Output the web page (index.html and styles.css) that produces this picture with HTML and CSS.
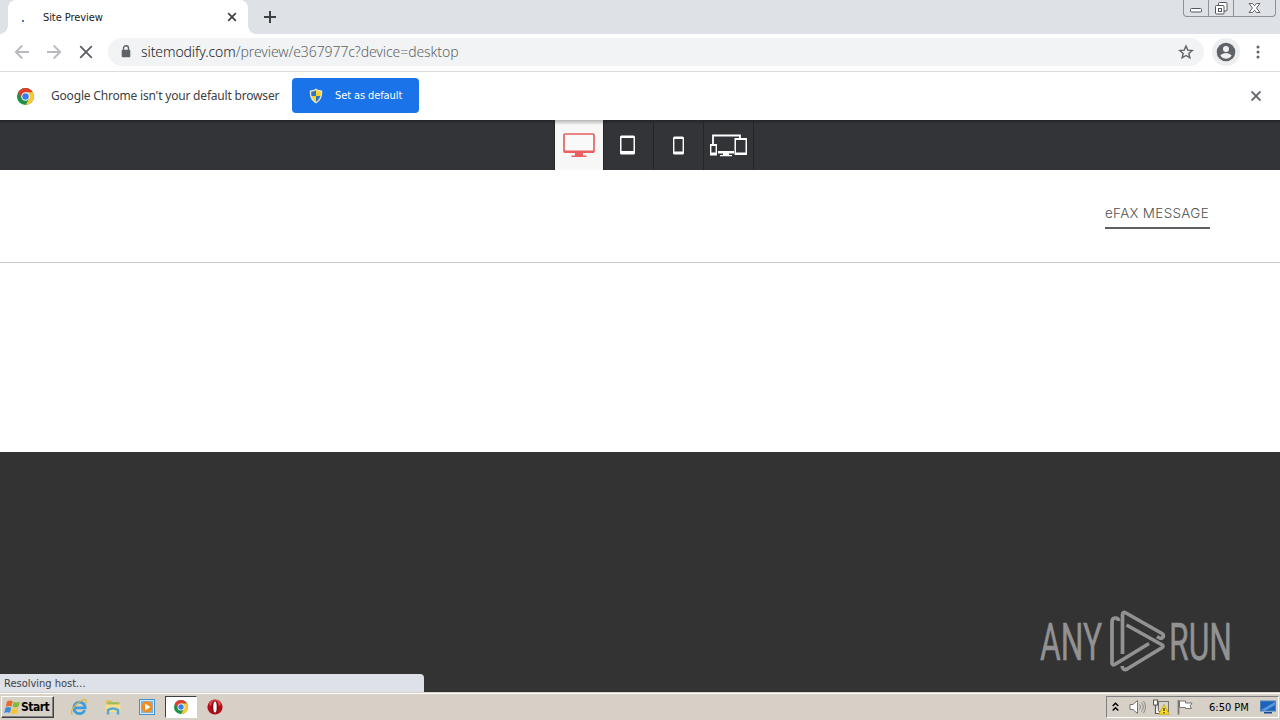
FILE: index.html
```html
<!DOCTYPE html>
<html lang="en">
<head>
    <meta charset="UTF-8">
    <meta name="viewport" content="width=device-width, initial-scale=1.0">
    <title>Site Preview</title>
    <link rel="stylesheet" href="styles.css">
</head>
<body>

<div class="screen">

    <!-- Tab strip -->
    <header class="tab-strip">
        <div class="tab">
            <span class="tab-spinner"></span>
            <span class="tab-title">Site Preview</span>
            <svg class="tab-close" width="10" height="10" viewBox="0 0 10 10"><path d="M1.2 1.2l7.6 7.6M8.8 1.2L1.2 8.8" stroke="#3c4043" stroke-width="1.7"/></svg>
        </div>
        <svg class="new-tab" width="12" height="12" viewBox="0 0 12 12"><path d="M6 0v12M0 6h12" stroke="#3c4043" stroke-width="2"/></svg>
        <div class="window-buttons">
            <span class="win-btn win-min"><svg width="13" height="17" viewBox="0 0 13 17"><rect x=".5" y="8.500" width="11" height="3.500" rx="1" fill="#fff" stroke="#53565f"/></svg></span>
            <span class="win-btn win-max"><svg width="13" height="17" viewBox="0 0 13 17"><rect x="3.500" y="2.500" width="8.500" height="8.500" rx="1" fill="#fff" stroke="#53565f"/><rect x=".5" y="5.500" width="8.500" height="8.500" rx="1" fill="#fff" stroke="#53565f"/><rect x="3.500" y="8.500" width="3" height="3" fill="#fff" stroke="#53565f"/></svg></span>
            <span class="win-btn win-close"><svg width="13" height="17" viewBox="0 0 13 17"><path d="M1 3.500h3.500l2 2.300 2-2.300H12L8.500 8l3.500 4.500H8.500l-2-2.300-2 2.300H1L4.500 8z" fill="#fff" stroke="#53565f" stroke-width=".9"/></svg></span>
        </div>
    </header>

    <!-- Toolbar -->
    <div class="toolbar">
        <svg class="nav-icon" width="16" height="16" viewBox="0 0 16 16"><path d="M15 8H2M8.300 1.500L1.800 8l6.500 6.500" fill="none" stroke="#b8babd" stroke-width="1.800"/></svg>
        <svg class="nav-icon" width="16" height="16" viewBox="0 0 16 16"><path d="M1 8h13M7.700 1.500L14.200 8l-6.500 6.500" fill="none" stroke="#b8babd" stroke-width="1.800"/></svg>
        <svg class="nav-icon" width="16" height="16" viewBox="0 0 16 16"><path d="M2.200 2.200l11.600 11.600M13.800 2.200L2.200 13.800" stroke="#5b5e62" stroke-width="1.800"/></svg>
        <div class="omnibox">
            <svg width="10" height="13" viewBox="0 0 10 13"><path d="M2.500 5.500V3.300a2.500 2.500 0 0 1 5 0v2.200" fill="none" stroke="#5f6368" stroke-width="1.400"/><rect x=".7" y="4.700" width="8.600" height="7.500" rx="1" fill="#5f6368"/></svg>
            <span class="url"><span class="url-host">sitemodify.com</span>/preview/e367977c?device=desktop</span>
            <svg class="star" width="16" height="16" viewBox="0 0 16 16"><path d="M8 2l1.750 4.100 4.450.4-3.400 2.900 1.050 4.400L8 11.500l-3.850 2.300L5.200 9.400 1.800 6.500l4.450-.4z" fill="none" stroke="#5f6368" stroke-width="1.400"/></svg>
        </div>
        <div class="avatar">
            <svg width="20" height="20" viewBox="0 0 20 20"><circle cx="10" cy="10" r="9.300" fill="#5f6368"/><circle cx="10" cy="7" r="3" fill="#eef0f2"/><path d="M4.300 13.800c1.200-2 4-2.800 5.700-2.800s4.500.8 5.700 2.800A6.900 6.900 0 0 1 10 16.700a6.900 6.900 0 0 1-5.700-2.900z" fill="#eef0f2"/></svg>
        </div>
        <svg class="menu-dots" width="4" height="14" viewBox="0 0 4 14"><g fill="#5f6368"><circle cx="2" cy="2" r="1.500"/><circle cx="2" cy="7" r="1.500"/><circle cx="2" cy="12" r="1.500"/></g></svg>
    </div>

    <!-- Default browser bar -->
    <div class="infobar">
        <svg class="chrome-logo" width="17" height="17" viewBox="2 2 44 44"><circle cx="24" cy="24" r="22" fill="#1e9148"/><path d="M4.950 13A22 22 0 0 1 43.050 13H24l-9.500 16.500z" fill="#e33b2e"/><path d="M24 13h19.050A22 22 0 0 1 24 46l9.500-16.500z" fill="#fcc934"/><circle cx="24" cy="24" r="11" fill="#fff"/><circle cx="24" cy="24" r="8.500" fill="#3b7ded"/></svg>
        <span class="infobar-text">Google Chrome isn't your default browser</span>
        <span class="default-btn">
            <svg width="16" height="16" viewBox="0 0 16 16"><path d="M8 .6C6 2 4 2.500 1.800 2.500c-.3 6 1.200 10 6.200 12.900 5-2.900 6.500-6.900 6.200-12.900C12 2.500 10 2 8 .6z" fill="#e9e5c4"/><path d="M8 2.300C6.500 3.200 5 3.600 3.200 3.700 3.100 5.500 3.200 7 3.600 8H8z" fill="#3274c4"/><path d="M8 2.300c1.500.9 3 1.300 4.800 1.400.1 1.800 0 3.300-.4 4.300H8z" fill="#f7d32c"/><path d="M3.600 8c.7 2.500 2 4.300 4.400 5.900V8z" fill="#f7d32c"/><path d="M12.400 8c-.7 2.500-2 4.300-4.400 5.900V8z" fill="#3274c4"/></svg>
            <span class="default-label">Set as default</span>
        </span>
        <svg class="infobar-close" width="10" height="10" viewBox="0 0 10 10"><path d="M.5.500l9 9M9.500.500l-9 9" stroke="#5f6368" stroke-width="1.900"/></svg>
    </div>

    <!-- Device switcher -->
    <nav class="devices">
        <span class="device device-active">
            <svg width="32" height="26" viewBox="0 0 32 26"><rect x="1" y="2" width="30" height="18" rx="1" fill="#f9f9f9" stroke="#e8605f" stroke-width="1.700"/><path d="M1 18.500h30V21H1zM12 21h8v2.500h3.500V25h-15v-1.500H12z" fill="#e8605f"/></svg>
        </span>
        <span class="device">
            <svg width="17" height="20" viewBox="0 0 17 20"><path d="M1.500.5h12A1.500 1.500 0 0 1 15 2v16a1.500 1.500 0 0 1-1.500 1.500h-12A1.500 1.500 0 0 1 0 18V2A1.500 1.500 0 0 1 1.500.5zM1.500 3v13h12V3z" fill="#fff" fill-rule="evenodd"/></svg>
        </span>
        <span class="device">
            <svg width="11" height="19" viewBox="0 0 11 19"><path d="M1.500.5h8A1.500 1.500 0 0 1 11 2v15a1.500 1.500 0 0 1-1.500 1.500h-8A1.500 1.500 0 0 1 0 17V2A1.500 1.500 0 0 1 1.500.5zM1.400 3v12.500h8.200V3z" fill="#fff" fill-rule="evenodd"/></svg>
        </span>
        <span class="device">
            <svg width="38" height="24" viewBox="0 0 38 24"><path d="M3 11V2.500h27V6" fill="none" stroke="#fff" stroke-width="1.800"/><path d="M8 18h16v2.500h-5V22h3v1.200H10V22h3v-1.500H8z" fill="#fff"/><path d="M0 11h7v11.500H0zM1.400 13v6.500h4.200V13z" fill="#fff" fill-rule="evenodd"/><path d="M24.500 5H37v17H24.500zM26 7v12.500h9.500V7z" fill="#fff" fill-rule="evenodd"/></svg>
        </span>
    </nav>

    <!-- Previewed site -->
    <main class="site">
        <div class="site-header"><a class="site-link">eFAX MESSAGE</a></div>
        <div class="site-body"></div>
        <div class="site-footer">
            <svg class="watermark" width="200" height="70" viewBox="0 0 200 70">
                <g class="watermark-text">
                    <text x="1" y="51" textLength="62" lengthAdjust="spacingAndGlyphs">ANY</text>
                    <text x="130" y="51" textLength="63" lengthAdjust="spacingAndGlyphs">RUN</text>
                </g>
                <g fill="none" stroke="#929292" stroke-width="3.700" stroke-linejoin="round">
                    <path d="M79.500 12q0-3-3-3-3.500 0-3.500 4V54q0 3 3.500 1L110 34.500"/>
                    <path d="M83.500 45V6q0-4 3.500-2l36 20.500q3 2.500 0 4.500-1.500 1-5-1.500"/>
                    <path d="M87.500 16l35 19.500q3 1.500 0 3.500L88 60q-4 2-5-3"/>
                </g>
            </svg>
        </div>
        <div class="status-bubble">Resolving host...</div>
    </main>

    <!-- Taskbar -->
    <footer class="taskbar">
        <div class="start-btn">
            <svg width="17" height="16" viewBox="0 0 17 16"><path d="M3 2.500Q6 .5 8.700 2.200L7.500 7.500Q5 6.300 1.800 7.800z" fill="#e96a2b"/><path d="M9.700 2.700q3 1.500 6.300-.2l-1.500 5.300q-3 1.400-6-.1z" fill="#83b93c"/><path d="M1.500 8.800q3-1.500 5.700-.2L6 13.800Q3 12.500.2 14z" fill="#3c8bd5"/><path d="M8.200 9q3 1.500 6 0L12.800 14.300q-3 1.400-5.900-.1z" fill="#f8c431"/></svg>
            <span>Start</span>
        </div>
        <div class="quick-launch">
            <span class="task"><svg width="18" height="18" viewBox="0 0 18 18"><path d="M14.700 12.300A5.700 5.700 0 1 1 15.200 9.800H5" fill="none" stroke="#3b9ddd" stroke-width="2.700"/><path d="M2.500 16.500C-1 15 4 7 10 3.500c5.500-3.500 7.500-1.500 5.500 2" fill="none" stroke="#e8b53a" stroke-width="1.300"/></svg></span>
            <span class="task"><svg width="18" height="18" viewBox="0 0 18 18"><path d="M2 2.500h5.500l1 1.500H16v10H2z" fill="#dfba58"/><path d="M4 4.500h10v2H4z" fill="#8abf6c"/><path d="M1.500 6.500h15V14h-15z" fill="#f5df8c"/><path d="M4 16.500V12q5-3 10 0v4.500" fill="none" stroke="#55a8d6" stroke-width="2.500"/></svg></span>
            <span class="task"><svg width="18" height="18" viewBox="0 0 18 18"><rect x="1.500" y="1.500" width="15" height="15" fill="#d5eafa" stroke="#4391cf"/><rect x="3" y="3" width="12" height="12" fill="#79b7e5"/><circle cx="9" cy="9" r="5.700" fill="#f28b20"/><path d="M7 5.500L12.500 9 7 12.500z" fill="#fff"/></svg></span>
            <span class="task task-active"><svg width="14" height="14" viewBox="2 2 44 44"><circle cx="24" cy="24" r="22" fill="#1e9148"/><path d="M4.950 13A22 22 0 0 1 43.050 13H24l-9.500 16.500z" fill="#e33b2e"/><path d="M24 13h19.050A22 22 0 0 1 24 46l9.500-16.500z" fill="#fcc934"/><circle cx="24" cy="24" r="11" fill="#fff"/><circle cx="24" cy="24" r="8.500" fill="#3b7ded"/></svg></span>
            <span class="task"><svg width="16" height="16" viewBox="0 0 16 16"><circle cx="8" cy="8" r="7.600" fill="#b50d16"/><ellipse cx="8" cy="4.500" rx="6" ry="3.800" fill="#d9474b"/><ellipse cx="8" cy="8" rx="3.800" ry="6.500" fill="#920d12"/><ellipse cx="8" cy="8" rx="1.700" ry="5.500" fill="#fff"/></svg></span>
        </div>
        <div class="tray">
            <svg class="tray-up" width="7" height="10" viewBox="0 0 7 10"><path d="M.7 4l2.800-2.700L6.300 4M.7 8.500l2.800-2.700 2.800 2.700" fill="none" stroke="#000" stroke-width="1.500"/></svg>
            <svg class="tray-sound" width="17" height="16" viewBox="0 0 17 16"><path d="M1 5.500h3L8.500 1.500v13L4 10.500H1z" fill="#fff" stroke="#77756f"/><path d="M10.500 5.500q2 2.500 0 5M12.500 3.500q3.500 4.500 0 9M14.500 2q4 6 0 12" fill="none" stroke="#8b8982"/></svg>
            <svg class="tray-net" width="17" height="16" viewBox="0 0 17 16"><rect x="5.500" y="2.500" width="10" height="10" fill="#d6d4cc" stroke="#77756f"/><path d="M.5 1h4v5h-4zM2.500 6v8.500h4" fill="#fff" stroke="#5d5b55" stroke-width="1.200"/><path d="M11 5.500l5.200 9.700H5.800z" fill="#ffdd1e" stroke="#bb9700" stroke-width=".7"/><path d="M11 9v3M11 13v1.200" stroke="#222" stroke-width="1.200"/></svg>
            <svg class="tray-flag" width="16" height="16" viewBox="0 0 16 16"><path d="M1.500 1v14.500" stroke="#77756f" stroke-width="1.700"/><path d="M2.500 2h6v2H15l-2 3 1.500 2.500H8.500v-1h-6z" fill="#fff" stroke="#77756f"/></svg>
            <span class="clock">6:50 PM</span>
            <svg class="tray-desktop" width="16" height="14" viewBox="0 0 16 14"><rect x=".5" y="1" width="15" height="10" fill="#1e63bb" stroke="#4c81be"/><path d="M1 10L15 2v3L5 11z" fill="#5798df"/><path d="M4 12h8v1.500H4z" fill="#174b8c"/></svg>
        </div>
    </footer>
</div>

</body>
</html>
```

FILE: styles.css
```css
/* Base */
* {
    box-sizing: border-box;
}
body {
    margin: 0;
    font-family: "DejaVu Sans Condensed", "DejaVu Sans", sans-serif;
    font-size: 11px;
    color: #202124;
}
svg {
    display: block;
    flex: none;
}
.screen {
    display: flex;
    flex-direction: column;
    width: 1280px;
    height: 720px;
    overflow: hidden;
    background: #fff;
}

/* Tab strip */
.tab-strip {
    display: flex;
    height: 34px;
    padding-left: 8px;
    background: #dee1e6;
}
.tab {
    position: relative;
    display: flex;
    align-items: center;
    width: 240px;
    padding: 0 11px 0 14px;
    background: #fff;
    border-radius: 8px 8px 0 0;
}
.tab::before,
.tab::after {
    content: "";
    position: absolute;
    bottom: 0;
    width: 8px;
    height: 8px;
}
.tab::before {
    left: -8px;
    background: radial-gradient(circle at 0 0, #dee1e6 7.5px, #fff 8px);
}
.tab::after {
    right: -8px;
    background: radial-gradient(circle at 100% 0, #dee1e6 7.5px, #fff 8px);
}
.tab-spinner {
    width: 2px;
    height: 2px;
    margin: 8px 19px 0 0;
    background: #5577c4;
}
.tab-title {
    flex: 1;
    letter-spacing: -0.08px;
}
.new-tab {
    margin: 11px 0 0 16px;
}
.window-buttons {
    display: flex;
    width: 93px;
    height: 17px;
    margin-left: auto;
    margin-right: 4px;
    border: 1px solid #8d929c;
    border-top: 0;
    border-radius: 0 0 4px 4px;
}
.win-btn {
    display: flex;
    justify-content: center;
}
.win-min {
    width: 24px;
}
.win-max {
    width: 25px;
    border-left: 1px solid #8d929c;
}
.win-close {
    flex: 1;
    border-left: 1px solid #8d929c;
}

/* Toolbar */
.toolbar {
    display: flex;
    align-items: center;
    height: 38px;
    padding: 0 20px 2px 14px;
    border-bottom: 1px solid #d9dbdf;
}
.nav-icon {
    margin-right: 16px;
}
.omnibox {
    display: flex;
    align-items: center;
    width: 1096px;
    height: 28px;
    margin-left: -2px;
    padding: 0 10px 0 13px;
    border-radius: 14px;
    background: #f1f3f4;
}
.url {
    flex: 1;
    margin-left: 10px;
    font-family: "Noto Sans", sans-serif;
    font-size: 14px;
    font-weight: 300;
    letter-spacing: -0.09px;
    color: #5f6368;
}
.url-host {
    color: #202124;
}
.avatar {
    display: flex;
    align-items: center;
    justify-content: center;
    width: 28px;
    height: 28px;
    margin-left: 8px;
    border-radius: 50%;
    background: #eceef0;
}
.menu-dots {
    margin-left: auto;
}

/* Default browser bar */
.infobar {
    display: flex;
    align-items: center;
    height: 48px;
    padding: 0 19px 0 17px;
}
.infobar-text {
    width: 229px;
    margin: -2px 0 0 17px;
    font-family: "Noto Sans", sans-serif;
    font-size: 12px;
    letter-spacing: -0.19px;
    color: #3c4043;
    white-space: nowrap;
}
.default-btn {
    display: flex;
    align-items: center;
    width: 127px;
    height: 35px;
    margin: -1px 0 0 12px;
    padding-left: 16px;
    border-radius: 4px;
    background: #1a73e8;
    color: #fff;
}
.default-label {
    margin-left: 11px;
    letter-spacing: -0.1px;
}
.infobar-close {
    margin-left: auto;
}

/* Device switcher */
.devices {
    display: flex;
    height: 50px;
    padding-left: 554px;
    background: linear-gradient(#232428, #333438 4px);
}
.device {
    display: flex;
    align-items: center;
    justify-content: center;
    width: 50px;
    border-right: 1px solid #242528;
}
.device-active {
    border-left: 1px solid #242528;
    background: linear-gradient(#b4b4b4, #f7f7f7 5px);
}

/* Previewed site */
.site {
    position: relative;
    display: flex;
    flex-direction: column;
    height: 522px;
}
.site-header {
    display: flex;
    justify-content: flex-end;
    height: 93px;
    padding: 34px 70px 0 0;
    border-bottom: 1px solid #c8c8c8;
}
.site-link {
    width: 105px;
    height: 25px;
    border-bottom: 2px solid #606060;
    font-family: "Inter", "Liberation Sans", sans-serif;
    font-size: 13.5px;
    font-weight: 300;
    line-height: 19px;
    letter-spacing: 0.3px;
    color: #505050;
    white-space: nowrap;
}
.site-body {
    height: 189px;
}
.site-footer {
    display: flex;
    flex: 1;
    align-items: flex-end;
    justify-content: flex-end;
    padding: 0 41px 13px 0;
    background: #333;
}
.watermark-text {
    fill: #929292;
    stroke: #929292;
    stroke-width: 0.5px;
    font-family: "Roboto", sans-serif;
    font-size: 52px;
    font-weight: 400;
}
.status-bubble {
    position: absolute;
    left: 0;
    bottom: 0;
    width: 424px;
    height: 18px;
    padding-left: 4px;
    border-radius: 0 4px 0 0;
    background: #dee1e8;
    color: #3c4043;
    line-height: 19px;
}

/* Taskbar */
.taskbar {
    display: flex;
    height: 28px;
    padding: 3px 0 2px 1px;
    border-top: 1px solid #d4d0c8;
    background: #d6d0c7;
    box-shadow: inset 0 1px #fff;
    color: #000;
}
.start-btn {
    display: flex;
    align-items: center;
    width: 53px;
    height: 22px;
    padding-left: 2px;
    border: 1px solid;
    border-color: #fff #404040 #404040 #fff;
    box-shadow: inset -1px -1px #808080;
    font-size: 12px;
    font-weight: bold;
    letter-spacing: -0.5px;
}
.quick-launch {
    display: flex;
    margin-left: 9px;
    gap: 2px;
}
.task {
    display: flex;
    align-items: center;
    justify-content: center;
    width: 32px;
    height: 22px;
}
.task-active {
    border: 1px solid;
    border-color: #404040 #fff #fff #404040;
    background: #fff;
}
.tray {
    display: flex;
    align-items: center;
    width: 173px;
    height: 22px;
    margin: 0 1px 0 auto;
    padding-left: 5px;
    border: 1px solid;
    border-color: #808080 #fff #fff #808080;
}
.tray-sound {
    margin-left: 10px;
}
.tray-net {
    margin-left: 7px;
}
.tray-flag {
    margin-left: 7px;
}
.clock {
    width: 42px;
    margin-left: 16px;
    white-space: nowrap;
}
.tray-desktop {
    margin-left: 9px;
}
```
